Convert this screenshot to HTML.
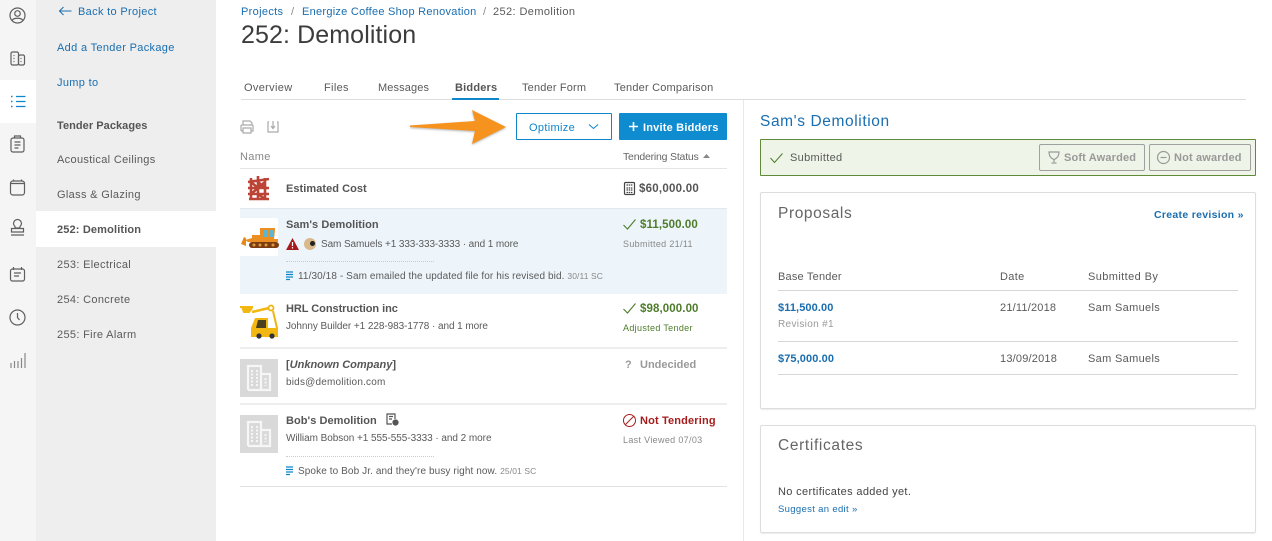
<!DOCTYPE html>
<html><head><meta charset="utf-8"><style>
html,body{margin:0;padding:0;background:#fff}
#p{position:relative;width:1272px;height:541px;overflow:hidden;background:#fff;font-family:"Liberation Sans",sans-serif;font-size:11px;color:#5a5a5a;letter-spacing:.33px}
.t{position:absolute;white-space:nowrap;line-height:16px;margin-top:2px}
.r{position:absolute}
.b{color:#1a6eb0}.k{font-weight:700;color:#555;letter-spacing:.05px}
svg{position:absolute;overflow:visible}
.ic{fill:none;stroke:#5f5f5f;stroke-width:1.2}
</style></head><body><div id="p">
<div class="r" style="left:0;top:0;width:36px;height:541px;background:#f5f5f5"></div>
<div class="r" style="left:36px;top:0;width:180px;height:541px;background:#eeeeee"></div>
<div class="r" style="left:0;top:80px;width:36px;height:43px;background:#fff"></div>
<div class="r" style="left:36px;top:211px;width:180px;height:36px;background:#fff"></div>

<svg class="ic" style="left:0;top:0" width="36" height="400" viewBox="0 0 36 400">
<circle cx="17.500" cy="15.500" r="7.500"/><circle cx="17.500" cy="13.500" r="2.800"/><path d="M12 20.500c1.500-3 9.500-3 11 0"/>
<rect x="11" y="52" width="7.500" height="13" rx="1.500"/><rect x="18.500" y="55" width="6" height="10" rx="1.500"/><path d="M13.500 55.500h2.500M13.500 58.500h2.500M13.500 61.500h2.500M20.500 58.500h2M20.500 61.500h2" stroke-dasharray="1 1.500"/>
<g stroke="#0f86c9"><path d="M16 96.500h9.500M16 101.500h9.500M16 106.500h9.500" stroke-width="1.300"/><path d="M11 96.500h1.500M11 101.500h1.500M11 106.500h1.500" stroke-width="1.500"/></g>
<rect x="11" y="138" width="13" height="14" rx="2"/><path d="M14.500 138v-2h6v2M14.500 142h6M14.500 145h6M14.500 148h4"/>
<rect x="10.500" y="181" width="14" height="14" rx="2.500"/><path d="M10.500 183.500h14M13.500 179.500v2M21.500 179.500v2"/>
<path d="M15 228c1-2-1.500-2-1.500-4.500a4 4 0 0 1 8 0c0 2.500-2.500 2.500-1.500 4.500zM11.500 232v-3.500h12v3.500zM11 235h13"/>
<rect x="10.500" y="269" width="14" height="12" rx="2"/><path d="M13.500 267v3M21.500 267v3M14 273h7M14 276h5"/>
<circle cx="17.500" cy="317.500" r="7.500"/><path d="M17.500 313v4.500l2 2.500"/>
<path d="M11 368v-5M14.500 368v-7M18 368v-7M21.500 368v-10M25 368v-15" stroke="#888"/>
</svg>

<svg style="left:59px;top:6px" width="13" height="10"><path d="M.5 5h12M4.500 1L.5 5l4 4" fill="none" stroke="#1a6eb0"/></svg>
<div class="t b" style="left:78px;top:2px">Back to Project</div>
<div class="t b" style="left:57px;top:38px">Add a Tender Package</div>
<div class="t b" style="left:57px;top:73px">Jump to</div>
<div class="t k" style="left:57px;top:116px">Tender Packages</div>
<div class="t" style="left:57px;top:150px">Acoustical Ceilings</div>
<div class="t" style="left:57px;top:185px">Glass &amp; Glazing</div>
<div class="t k" style="left:57px;top:220px;letter-spacing:.15px">252: Demolition</div>
<div class="t" style="left:57px;top:255px">253: Electrical</div>
<div class="t" style="left:57px;top:290px">254: Concrete</div>
<div class="t" style="left:57px;top:325px">255: Fire Alarm</div>

<div class="t b" style="left:241px;top:2px">Projects</div>
<div class="t" style="left:291px;top:2px;color:#888">/</div>
<div class="t b" style="left:302px;top:2px;letter-spacing:.27px">Energize Coffee Shop Renovation</div>
<div class="t" style="left:483px;top:2px;color:#888">/</div>
<div class="t" style="left:493px;top:2px;letter-spacing:.4px">252: Demolition</div>
<div class="t" style="left:241px;top:18px;font-size:25px;line-height:30px;color:#3c3c3c;letter-spacing:.1px">252: Demolition</div>

<div class="t" style="left:244px;top:78px">Overview</div>
<div class="t" style="left:324px;top:78px">Files</div>
<div class="t" style="left:378px;top:78px;letter-spacing:.12px">Messages</div>
<div class="t k" style="left:455px;top:78px;letter-spacing:.2px">Bidders</div>
<div class="t" style="left:522px;top:78px;letter-spacing:.17px">Tender Form</div>
<div class="t" style="left:614px;top:78px;letter-spacing:.2px">Tender Comparison</div>
<div class="r" style="left:241px;top:99px;width:1005px;height:1px;background:#ddd"></div>
<div class="r" style="left:452px;top:98px;width:47px;height:2px;background:#0f86c9"></div>
<div class="r" style="left:743px;top:100px;width:1px;height:441px;background:#e8e8e8"></div>

<svg class="ic" style="left:240px;top:120px;stroke:#aaa" width="50" height="14"><path d="M3 5V1h7l2 2v2M1 11V6q0-1 1-1h10q1 0 1 1v5h-2M3 11H1M3 8h8v5H3z"/><path d="M29 2h-1v10h10V2h-1M33 1v7M31 6l2 2.500L35 6"/></svg>

<svg style="left:405px;top:106px" width="105" height="44"><path d="M5 19.500L70 15 67 4l34 17-34 17 3-13-65-4z" fill="#f6921e" style="filter:drop-shadow(0 1px 1px rgba(0,0,0,.3))"/></svg>

<div class="r" style="left:516px;top:113px;width:94px;height:25px;border:1px solid #0f86c9;border-radius:1px"></div>
<div class="t" style="left:529px;top:118px;color:#0f86c9">Optimize</div>
<svg style="left:588px;top:124px" width="11" height="6"><path d="M1 .5l4.500 4 4.500-4" fill="none" stroke="#0f86c9"/></svg>
<div class="r" style="left:619px;top:113px;width:108px;height:27px;background:#0f8bd0;border-radius:1px"></div>
<div class="t" style="left:643px;top:118px;color:#fff;font-weight:700;letter-spacing:.2px">Invite Bidders</div>
<svg style="left:629px;top:122px" width="9" height="9"><path d="M4.500 0v9M0 4.500h9" stroke="#fff" stroke-width="1.600"/></svg>

<div class="t" style="left:240px;top:147px;color:#888;">Name</div>
<div class="t" style="left:623px;top:147px;color:#666;font-size:10.500px;letter-spacing:-.2px;font-weight:400">Tendering Status</div>
<svg style="left:703px;top:154px" width="7" height="4"><path d="M0 4l3.500-4L7 4z" fill="#888"/></svg>
<div class="r" style="left:240px;top:168px;width:487px;height:1px;background:#e5e5e5"></div>

<svg style="left:247px;top:175px;fill:none;stroke:#bb4436;stroke-width:2.600" width="24" height="26"><path d="M4 3v21M11 1v23M18 3v21M1 7l21-3M1 13h21M1 19h21M4 7l7 6M11 7l7 6M18 7l-7 6M4 19l7-6M18 24l-7-5M2 24h20" /></svg>
<div class="t k" style="left:286px;top:179px">Estimated Cost</div>
<svg class="ic" style="left:624px;top:182px;stroke:#444" width="11" height="13"><rect x=".5" y=".5" width="10" height="12" rx="1"/><path d="M2.500 3h6M2.500 6h6M2.500 8h6M2.500 10.500h6" stroke-dasharray="1.500 .7" stroke-width="1.300"/></svg>
<div class="t k" style="left:639px;top:179px;font-size:11.500px;letter-spacing:.25px">$60,000.00</div>

<div class="r" style="left:240px;top:208px;width:487px;height:85px;background:#edf5fb;border-top:1px solid #e2e8ec"></div>
<div class="r" style="left:240px;top:218px;width:38px;height:38px;background:#fff"></div>
<svg style="left:240px;top:225px" width="40" height="25"><path d="M1 19l3-7 2 1 0 8z" fill="#e58a1a"/><path d="M5 15l7-2v-3h8V3h15v2l-1 9h4v3H8z" fill="#ec8f22"/><path d="M23 5h5v7h-5zM29 5h4v7h-4z" fill="#5bb6d4"/><rect x="9" y="17" width="30" height="6" rx="3" fill="#7b3d12"/><circle cx="14" cy="20" r="1.500" fill="#e09b3d"/><circle cx="20" cy="20" r="1.500" fill="#e09b3d"/><circle cx="26" cy="20" r="1.500" fill="#e09b3d"/><circle cx="33" cy="20" r="1.500" fill="#e09b3d"/></svg>
<div class="t k" style="left:286px;top:215px">Sam's Demolition</div>
<svg style="left:286px;top:238px" width="13" height="12"><path d="M6.500 0L13 12H0z" fill="#a61c1c"/><path d="M6.500 4v4M6.500 9v1.500" stroke="#fff" stroke-width="1.200"/></svg>
<svg style="left:303px;top:237px" width="14" height="14"><circle cx="7" cy="7" r="6" fill="#d9b88c"/><circle cx="9.500" cy="6.500" r="2.500" fill="#222"/></svg>
<div class="t" style="left:321px;top:235px;font-size:10px;letter-spacing:-.09px">Sam Samuels +1 333-333-3333 · and 1 more</div>
<div class="r" style="left:286px;top:261px;width:148px;border-top:1px dotted #ccc"></div>
<svg style="left:286px;top:271px" width="8" height="9"><path d="M0 1h7M0 3.500h7M0 6h7M0 8.500h4" stroke="#0f86c9" stroke-width="1.300"/></svg>
<div class="t" style="left:298px;top:266px;font-size:10px;letter-spacing:.1px">11/30/18 - Sam emailed the updated file for his revised bid. <span style="font-size:8.500px;color:#888">30/11 SC</span></div>
<svg style="left:623px;top:219px" width="13" height="11"><path d="M.5 6l4 4L12.500 .5" fill="none" stroke="#4e7c2b" stroke-width="1.100"/></svg>
<div class="t" style="left:640px;top:215px;font-weight:700;color:#4e7c2b;font-size:11.500px;letter-spacing:.1px">$11,500.00</div>
<div class="t" style="left:623px;top:234px;font-size:9px;color:#888">Submitted 21/11</div>

<svg style="left:240px;top:304px" width="38" height="40"><path d="M0 3h13M2 3l2 5h5l3-4" fill="#f2b711" stroke="#f2b711" stroke-width="2"/><path d="M12 8l17-4" fill="none" stroke="#f2b711" stroke-width="2.500"/><circle cx="31" cy="4" r="2.500" fill="none" stroke="#eeb410" stroke-width="1.800"/><path d="M33 7l4 17" stroke="#eeb410" stroke-width="2"/><path d="M15 14h13v10h10v9H11v-9z" fill="#f2b711"/><path d="M18 16h8v8h-10z" fill="#4a3f20"/><circle cx="19" cy="32" r="2.600" fill="#333"/><circle cx="32" cy="32" r="2.600" fill="#333"/></svg>
<div class="t k" style="left:286px;top:299px;letter-spacing:-.05px">HRL Construction inc</div>
<div class="t" style="left:286px;top:317px;font-size:10px;letter-spacing:-.07px">Johnny Builder +1 228-983-1778 · and 1 more</div>
<svg style="left:623px;top:303px" width="13" height="11"><path d="M.5 6l4 4L12.500 .5" fill="none" stroke="#4e7c2b" stroke-width="1.100"/></svg>
<div class="t" style="left:640px;top:299px;font-weight:700;color:#4e7c2b;font-size:11.500px;letter-spacing:.1px">$98,000.00</div>
<div class="t" style="left:623px;top:318px;font-size:9px;color:#4e7c2b">Adjusted Tender</div>
<div class="r" style="left:240px;top:347px;width:487px;height:2px;background:#eee"></div>

<div class="r" style="left:240px;top:359px;width:38px;height:38px;background:#d9d9d9"></div>
<svg style="left:247px;top:364px" width="25" height="28"><path d="M1 26V2h13v24M14 10h9v16H1" fill="none" stroke="#f6f6f6" stroke-width="2.200"/><path d="M5 6v16M10 6v16M18.500 14v8" stroke="#f6f6f6" stroke-width="2" stroke-dasharray="2 1.500"/></svg>
<div class="t" style="left:286px;top:355px;font-weight:700;color:#555;letter-spacing:0">[<i>Unknown Company</i>]</div>
<div class="t" style="left:286px;top:373px;font-size:10px;letter-spacing:.2px">bids@demolition.com</div>
<div class="t" style="left:625px;top:355px;color:#999;font-weight:700">?</div>
<div class="t" style="left:640px;top:355px;color:#999;font-weight:700;letter-spacing:0">Undecided</div>
<div class="r" style="left:240px;top:403px;width:487px;height:2px;background:#eee"></div>

<div class="r" style="left:240px;top:415px;width:38px;height:38px;background:#d9d9d9"></div>
<svg style="left:247px;top:420px" width="25" height="28"><path d="M1 26V2h13v24M14 10h9v16H1" fill="none" stroke="#f6f6f6" stroke-width="2.200"/><path d="M5 6v16M10 6v16M18.500 14v8" stroke="#f6f6f6" stroke-width="2" stroke-dasharray="2 1.500"/></svg>
<div class="t k" style="left:286px;top:411px">Bob's Demolition</div>
<svg class="ic" style="left:386px;top:413px;stroke:#555" width="13" height="13"><path d="M9 6V1H1v10h5M3 3.500h4M3 6h3"/><circle cx="9.500" cy="9.500" r="2.500" fill="#555"/></svg>
<div class="t" style="left:286px;top:429px;font-size:10px;letter-spacing:-.05px">William Bobson +1 555-555-3333 · and 2 more</div>
<div class="r" style="left:286px;top:456px;width:148px;border-top:1px dotted #ccc"></div>
<svg style="left:286px;top:466px" width="8" height="9"><path d="M0 1h7M0 3.500h7M0 6h7M0 8.500h4" stroke="#0f86c9" stroke-width="1.300"/></svg>
<div class="t" style="left:298px;top:461px;font-size:10px;letter-spacing:.1px">Spoke to Bob Jr. and they're busy right now. <span style="font-size:8.500px;color:#888">25/01 SC</span></div>
<svg style="left:623px;top:414px" width="13" height="13"><circle cx="6.500" cy="6.500" r="6" fill="none" stroke="#a61c1c"/><path d="M2.500 10.500l8-8" stroke="#a61c1c"/></svg>
<div class="t" style="left:640px;top:411px;font-weight:700;color:#a61c1c;letter-spacing:.15px">Not Tendering</div>
<div class="t" style="left:623px;top:430px;font-size:9px;color:#888">Last Viewed 07/03</div>
<div class="r" style="left:240px;top:486px;width:487px;height:1px;background:#e2e2e2"></div>

<div class="t b" style="left:760px;top:111px;font-size:15.500px;line-height:18px;letter-spacing:.6px">Sam's Demolition</div>
<div class="r" style="left:760px;top:139px;width:494px;height:35px;background:#eef4e7;border:1px solid #5f8a38;border-radius:1px"></div>
<svg style="left:770px;top:153px" width="13" height="10"><path d="M.5 5l4 4.500L12.500 .5" fill="none" stroke="#4e7c2b"/></svg>
<div class="t" style="left:790px;top:148px;">Submitted</div>
<div class="r" style="left:1039px;top:144px;width:104px;height:25px;border:1px solid #a0a0a0;border-radius:2px"></div>
<svg class="ic" style="left:1048px;top:151px;stroke:#999" width="12" height="13"><path d="M1 1h10c0 3-1 5-3 6.500-1 .5-1.500 1-2 1s-1-.5-2-1C2 6 1 4 1 1zM6 8.500V11M3.500 12h5"/></svg>
<div class="t" style="left:1064px;top:148px;color:#999;font-weight:700;letter-spacing:.15px">Soft Awarded</div>
<div class="r" style="left:1149px;top:144px;width:100px;height:25px;border:1px solid #a0a0a0;border-radius:2px"></div>
<svg class="ic" style="left:1157px;top:151px;stroke:#999" width="13" height="13"><circle cx="6.500" cy="6.500" r="6"/><path d="M3.500 6.500h6"/></svg>
<div class="t" style="left:1174px;top:148px;color:#999;font-weight:700;letter-spacing:.15px">Not awarded</div>

<div class="r" style="left:760px;top:192px;width:494px;height:215px;border:1px solid #ddd;border-radius:2px;box-shadow:0 1px 1px rgba(0,0,0,.08)"></div>
<div class="t" style="left:778px;top:203px;font-size:15.500px;line-height:18px;color:#666;letter-spacing:.6px">Proposals</div>
<div class="t" style="left:1154px;top:205px;font-weight:700;color:#1a6eb0;font-size:10.500px;letter-spacing:.3px">Create revision »</div>
<div class="t" style="left:778px;top:267px;letter-spacing:.2px">Base Tender</div>
<div class="t" style="left:1000px;top:267px">Date</div>
<div class="t" style="left:1088px;top:267px;letter-spacing:.4px">Submitted By</div>
<div class="r" style="left:778px;top:290px;width:460px;height:1px;background:#d8d8d8"></div>
<div class="t" style="left:778px;top:298px;font-weight:700;color:#1a6eb0;letter-spacing:.1px">$11,500.00</div>
<div class="t" style="left:778px;top:315px;font-size:10px;color:#999">Revision #1</div>
<div class="t" style="left:1000px;top:298px;letter-spacing:.2px">21/11/2018</div>
<div class="t" style="left:1088px;top:298px">Sam Samuels</div>
<div class="r" style="left:778px;top:341px;width:460px;height:1px;background:#d8d8d8"></div>
<div class="t" style="left:778px;top:349px;font-weight:700;color:#1a6eb0;letter-spacing:.1px">$75,000.00</div>
<div class="t" style="left:1000px;top:349px;letter-spacing:.2px">13/09/2018</div>
<div class="t" style="left:1088px;top:349px">Sam Samuels</div>
<div class="r" style="left:778px;top:374px;width:460px;height:1px;background:#d8d8d8"></div>

<div class="r" style="left:760px;top:425px;width:494px;height:106px;border:1px solid #ddd;border-radius:2px;box-shadow:0 1px 1px rgba(0,0,0,.08)"></div>
<div class="t" style="left:778px;top:435px;font-size:15.500px;line-height:18px;color:#666;letter-spacing:.65px">Certificates</div>
<div class="t" style="left:778px;top:482px;color:#444;letter-spacing:.35px">No certificates added yet.</div>
<div class="t" style="left:778px;top:500px;font-size:9.500px;color:#1a6eb0">Suggest an edit »</div>
</div></body></html>
